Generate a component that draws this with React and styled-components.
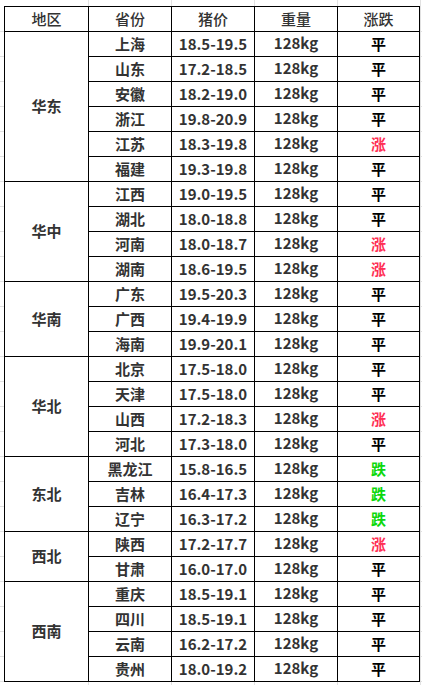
import React from "react";
import styled, { createGlobalStyle } from "styled-components";

const GlobalStyle = createGlobalStyle`
  html, body {
    margin: 0;
    padding: 0;
    background-color: #fff;
  }

  body {
    /* faint spreadsheet grid behind the table */
    background-image:
      repeating-linear-gradient(to bottom, transparent 0, transparent 24px, #e1e1e1 24px, #e1e1e1 25px),
      repeating-linear-gradient(to right, transparent 0, transparent 82px, #e1e1e1 82px, #e1e1e1 83px);
    background-position: 0 7px, 6px 0;
    min-height: 685px;
    font-family: "Noto Sans CJK SC", "Noto Sans", "Liberation Sans", sans-serif;
    color: #333;
  }
`;

const regions = [
  {
    name: "华东",
    rows: [
      ["上海", "18.5-19.5", "平"],
      ["山东", "17.2-18.5", "平"],
      ["安徽", "18.2-19.0", "平"],
      ["浙江", "19.8-20.9", "平"],
      ["江苏", "18.3-19.8", "涨"],
      ["福建", "19.3-19.8", "平"],
    ],
  },
  {
    name: "华中",
    rows: [
      ["江西", "19.0-19.5", "平"],
      ["湖北", "18.0-18.8", "平"],
      ["河南", "18.0-18.7", "涨"],
      ["湖南", "18.6-19.5", "涨"],
    ],
  },
  {
    name: "华南",
    rows: [
      ["广东", "19.5-20.3", "平"],
      ["广西", "19.4-19.9", "平"],
      ["海南", "19.9-20.1", "平"],
    ],
  },
  {
    name: "华北",
    rows: [
      ["北京", "17.5-18.0", "平"],
      ["天津", "17.5-18.0", "平"],
      ["山西", "17.2-18.3", "涨"],
      ["河北", "17.3-18.0", "平"],
    ],
  },
  {
    name: "东北",
    rows: [
      ["黑龙江", "15.8-16.5", "跌"],
      ["吉林", "16.4-17.3", "跌"],
      ["辽宁", "16.3-17.2", "跌"],
    ],
  },
  {
    name: "西北",
    rows: [
      ["陕西", "17.2-17.7", "涨"],
      ["甘肃", "16.0-17.0", "平"],
    ],
  },
  {
    name: "西南",
    rows: [
      ["重庆", "18.5-19.1", "平"],
      ["四川", "18.5-19.1", "平"],
      ["云南", "16.2-17.2", "平"],
      ["贵州", "18.0-19.2", "平"],
    ],
  },
];

const trendColors = {
  平: "#000",
  涨: "#ff2f55",
  跌: "#0cd80c",
};

const App = () => {
  return (
    <>
      <GlobalStyle />
      <Sheet>
        <PriceGrid>
          <HeadCell>地区</HeadCell>
          <HeadCell>省份</HeadCell>
          <HeadCell>猪价</HeadCell>
          <HeadCell>重量</HeadCell>
          <HeadCell>涨跌</HeadCell>
          {regions.map((region) => (
            <React.Fragment key={region.name}>
              <RegionCell $span={region.rows.length}>{region.name}</RegionCell>
              {region.rows.map(([province, price, trend]) => (
                <React.Fragment key={province}>
                  <Cell>{province}</Cell>
                  <Cell>{price}</Cell>
                  <Cell $raise>128kg</Cell>
                  <TrendCell $trend={trend}>{trend}</TrendCell>
                </React.Fragment>
              ))}
            </React.Fragment>
          ))}
        </PriceGrid>
      </Sheet>
    </>
  );
};

export default App;

const Sheet = styled.div`
  padding: 6px 0 0 4px;
`;

const PriceGrid = styled.div`
  display: grid;
  grid-template-columns: 84px 83px 83px 83px 82px;
  grid-auto-rows: 25px;
  width: fit-content;
  border-top: 1px solid #000;
  border-left: 1px solid #000;
  background-color: #fff;
`;

const Cell = styled.div`
  display: flex;
  align-items: center;
  justify-content: center;
  box-sizing: border-box;
  border-right: 1px solid #000;
  border-bottom: 1px solid #000;
  padding-bottom: ${({ $raise }) => ($raise ? "3px" : "1px")};
  font-size: 15px;
  font-weight: 700;
  line-height: 18px;
  color: #333;
  white-space: nowrap;
`;

const HeadCell = styled(Cell)`
  font-weight: 500;
`;

const RegionCell = styled(Cell)`
  grid-column: 1;
  grid-row: span ${({ $span }) => $span};
`;

const TrendCell = styled(Cell)`
  font-weight: 700;
  color: ${({ $trend }) => trendColors[$trend]};
`;
